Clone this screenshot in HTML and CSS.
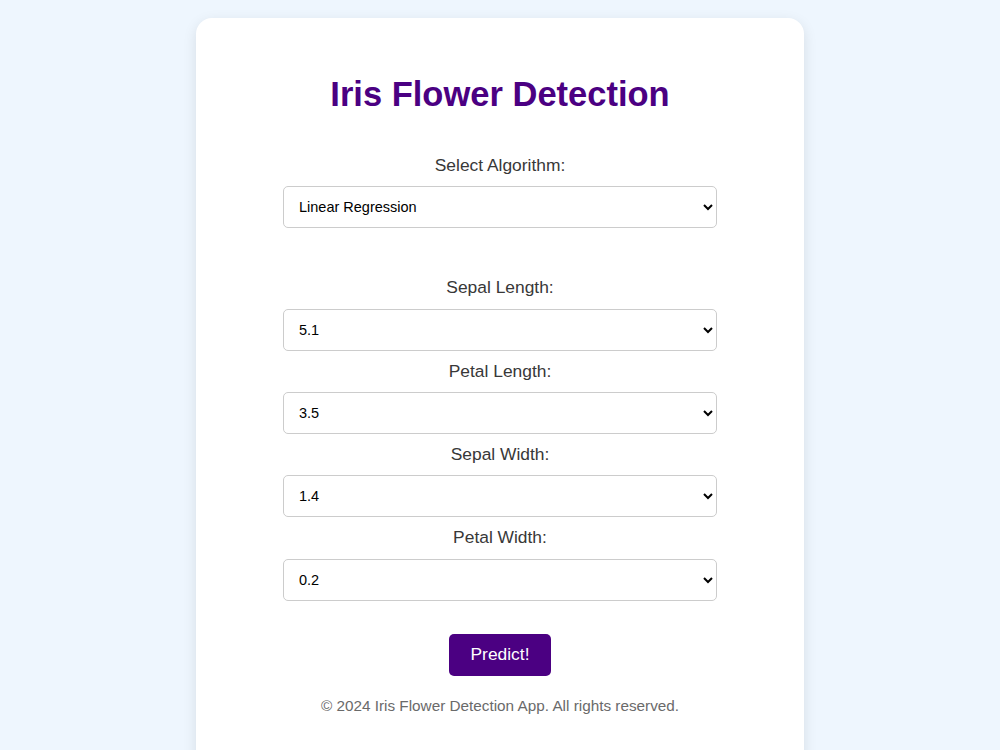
FILE: index.html
```html
<!DOCTYPE html>
<html lang="en">
<head>
<meta charset="utf-8">
<title>Iris Flower Detection</title>
<link rel="stylesheet" href="styles.css">
</head>
<body>
<div class="card">
  <h1 class="title">Iris Flower Detection</h1>
  <form class="form">
    <div class="group algo">
      <label class="label" for="algo">Select Algorithm:</label>
      <select class="select" id="algo">
        <option>Linear Regression</option>
        <option>Logistic Regression</option>
        <option>Decision Tree</option>
      </select>
    </div>
    <div class="group">
      <label class="label" for="sl">Sepal Length:</label>
      <select class="select" id="sl"><option>5.1</option></select>
      <label class="label" for="pl">Petal Length:</label>
      <select class="select" id="pl"><option>3.5</option></select>
      <label class="label" for="sw">Sepal Width:</label>
      <select class="select" id="sw"><option>1.4</option></select>
      <label class="label" for="pw">Petal Width:</label>
      <select class="select" id="pw"><option>0.2</option></select>
    </div>
    <button type="button" class="btn">Predict!</button>
  </form>
  <p class="footer">&copy; 2024 Iris Flower Detection App. All rights reserved.</p>
</div>
</body>
</html>
```
FILE: styles.css
```css
html, body {
  margin: 0;
  padding: 0;
}
body {
  background: #eef6fe;
  font-family: "Liberation Sans", Arial, sans-serif;
  padding-top: 18px;
  height: 750px;
  box-sizing: border-box;
  overflow: hidden;
}
.card {
  width: 608px;
  margin: 0 auto;
  background: #ffffff;
  border-radius: 16px;
  box-shadow: 0 4px 14px rgba(0, 0, 0, 0.1);
  padding: 56px 87px 60px;
  box-sizing: border-box;
  text-align: center;
}
.title {
  margin: 0 0 40px;
  font-size: 34.5px;
  font-weight: bold;
  color: #4b0082;
  line-height: 41px;
}
.form {
  display: flex;
  flex-direction: column;
  align-items: stretch;
}
.group {
  display: flex;
  flex-direction: column;
}
.algo {
  margin-bottom: 39px;
}
.label {
  display: block;
  font-size: 17.4px;
  line-height: 21.33px;
  color: #383838;
  margin-bottom: 10px;
}
.select {
  display: block;
  width: 100%;
  height: 42px;
  box-sizing: border-box;
  padding: 0 10px 0 11px;
  font-family: "Liberation Sans", Arial, sans-serif;
  font-size: 14.5px;
  color: #000;
  background: #fff;
  border: 1px solid #cccccc;
  border-radius: 5px;
  margin-bottom: 10px;
}
.btn {
  align-self: center;
  margin-top: 23px;
  width: 102px;
  height: 42px;
  background: #4b0082;
  color: #ffffff;
  border: none;
  border-radius: 5px;
  font-family: "Liberation Sans", Arial, sans-serif;
  font-size: 17.4px;
}
.footer {
  margin: 21px 0 0;
  font-size: 15.3px;
  line-height: 18px;
  color: #6a6a6a;
}
```
